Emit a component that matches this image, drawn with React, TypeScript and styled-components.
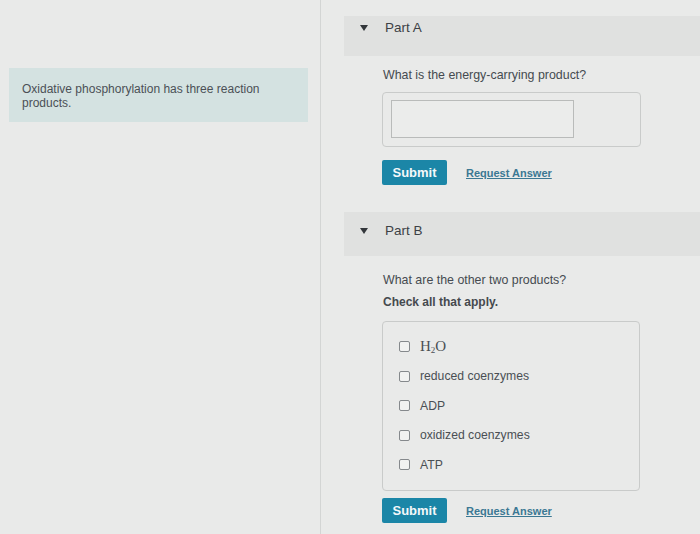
import styled, { createGlobalStyle } from "styled-components";

const GlobalStyle = createGlobalStyle`
  html, body {
    margin: 0;
    padding: 0;
    background: #e9eae9;
  }
  body {
    font-family: "Liberation Sans", Arial, sans-serif;
    color: #44484d;
  }
`;

const options: { key: string; label: React.ReactNode; serif?: boolean }[] = [
  { key: "h2o", label: <>H<sub>2</sub>O</>, serif: true },
  { key: "red", label: "reduced coenzymes" },
  { key: "adp", label: "ADP" },
  { key: "oxi", label: "oxidized coenzymes" },
  { key: "atp", label: "ATP" },
];

export default function App() {
  return (
    <Page>
      <GlobalStyle />
      <Intro>
        <Note>Oxidative phosphorylation has three reaction products.</Note>
      </Intro>
      <Main>
        <PartHeader $top={0} $pad={4} $height={40}>
          <Caret />
          <span>Part A</span>
        </PartHeader>
        <Question $mt={12}>What is the energy-carrying product?</Question>
        <AnswerBox>
          <AnswerInput />
        </AnswerBox>
        <Actions $mt={13}>
          <SubmitButton>Submit</SubmitButton>
          <AnswerLink href="#">Request Answer</AnswerLink>
        </Actions>

        <PartHeader $top={27} $pad={11} $height={44}>
          <Caret />
          <span>Part B</span>
        </PartHeader>
        <Question $mt={17}>What are the other two products?</Question>
        <Instruction>Check all that apply.</Instruction>
        <OptionBox>
          {options.map((o) => (
            <Option key={o.key}>
              <Check />
              <OptionLabel $serif={o.serif}>{o.label}</OptionLabel>
            </Option>
          ))}
        </OptionBox>
        <Actions $mt={7}>
          <SubmitButton>Submit</SubmitButton>
          <AnswerLink href="#">Request Answer</AnswerLink>
        </Actions>
      </Main>
    </Page>
  );
}

const Page = styled.div`
  display: grid;
  grid-template-columns: 321px 1fr;
  height: 534px;
  overflow: hidden;
`;

const Intro = styled.aside`
  border-right: 1px solid #d3d5d4;
  padding: 68px 12px 0 9px;
`;

const Note = styled.div`
  background: #d4e2e1;
  padding: 14px 40px 12px 13px;
  font-size: 12px;
  line-height: 14px;
  color: #4b5056;
`;

const Main = styled.main`
  padding: 16px 0 0 23px;
  display: flex;
  flex-direction: column;
  align-items: flex-start;
`;

const PartHeader = styled.div<{ $top: number; $pad: number; $height: number }>`
  align-self: stretch;
  box-sizing: border-box;
  margin-top: ${(p) => p.$top}px;
  height: ${(p) => p.$height}px;
  padding: ${(p) => p.$pad}px 0 0 16px;
  background: #e0e1e0;
  display: flex;
  align-items: flex-start;
  gap: 17px;
  font-size: 13.5px;
  line-height: 15px;
  color: #3d4146;
`;

const Caret = styled.i`
  width: 0;
  height: 0;
  margin-top: 5px;
  border-left: 4px solid transparent;
  border-right: 4px solid transparent;
  border-top: 6px solid #33373b;
`;

const Question = styled.p<{ $mt: number }>`
  margin: ${(p) => p.$mt}px 0 0 39px;
  font-size: 12.4px;
  line-height: 14px;
  color: #454a50;
`;

const Instruction = styled.p`
  margin: 8px 0 0 39px;
  font-size: 12px;
  line-height: 14px;
  font-weight: bold;
  color: #45494e;
`;

const AnswerBox = styled.div`
  box-sizing: border-box;
  margin: 10px 0 0 38px;
  width: 259px;
  height: 55px;
  padding: 7px 8px;
  border: 1px solid #c9cbca;
  border-radius: 4px;
`;

const AnswerInput = styled.div`
  box-sizing: border-box;
  width: 183px;
  height: 38px;
  border: 1px solid #b9bbba;
  background: #ebeceb;
`;

const Actions = styled.div<{ $mt: number }>`
  margin: ${(p) => p.$mt}px 0 0 38px;
  display: flex;
  align-items: center;
  gap: 19px;
`;

const SubmitButton = styled.button`
  width: 65px;
  height: 25px;
  border: none;
  border-radius: 2px;
  background: #1b86a7;
  color: #f4f8fa;
  font-family: "Liberation Sans", Arial, sans-serif;
  font-size: 13px;
  font-weight: bold;
  padding: 0;
`;

const AnswerLink = styled.a`
  font-size: 11px;
  font-weight: bold;
  color: #3b7893;
  text-decoration: underline;
`;

const OptionBox = styled.div`
  box-sizing: border-box;
  margin: 12px 0 0 38px;
  width: 258px;
  height: 170px;
  padding: 17px 0 0 16px;
  border: 1px solid #c9cbca;
  border-radius: 4px;
  display: flex;
  flex-direction: column;
  gap: 14.5px;
`;

const Option = styled.label`
  display: flex;
  align-items: center;
  gap: 10px;
  height: 15px;
`;

const Check = styled.span`
  box-sizing: border-box;
  width: 11px;
  height: 11px;
  border: 1.5px solid #85898c;
  border-radius: 2px;
  background: #f1f2f1;
`;

const OptionLabel = styled.span<{ $serif?: boolean }>`
  font-family: ${(p) =>
    p.$serif ? '"Liberation Serif", "Times New Roman", serif' : '"Liberation Sans", Arial, sans-serif'};
  font-size: ${(p) => (p.$serif ? "15px" : "12.2px")};
  color: #4a4f54;

  sub {
    font-size: 9px;
    vertical-align: -2px;
  }
`;
